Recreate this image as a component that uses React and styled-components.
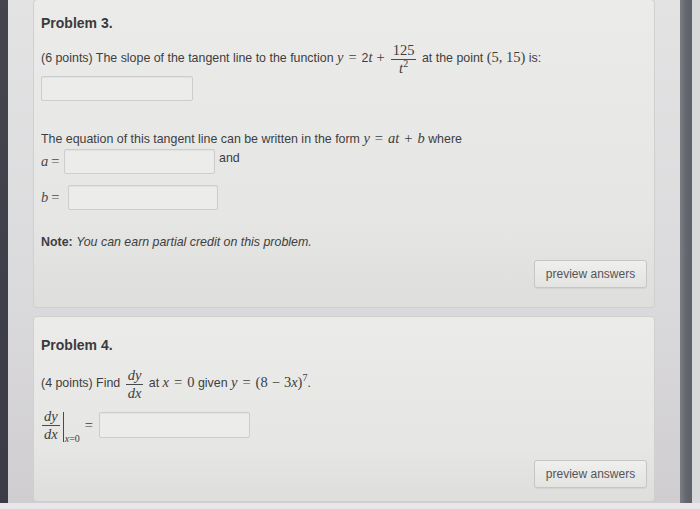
import React from "react";
import styled, { createGlobalStyle } from "styled-components";

const GlobalStyle = createGlobalStyle`
  html, body {
    margin: 0;
    padding: 0;
    background: #d9d8da;
  }
  body {
    font-family: "Liberation Sans", Arial, sans-serif;
    color: #3d3d3f;
  }
`;

const App = () => {
  return (
    <Page>
      <GlobalStyle />
      <Screen>
        <LeftEdge />
        <Main>
          <Card $top>
            <Title>Problem 3.</Title>
            <Line $mt={10}>
              (6 points) The slope of the tangent line to the function{" "}
              <M>y</M>
              <Op>=</Op>2<M>t</M>
              <Op $sp={4}>+</Op>
              <Frac>
                <Num>125</Num>
                <Den>
                  <M>t</M>
                  <sup>2</sup>
                </Den>
              </Frac>{" "}
              at the point <Mr>(5, 15)</Mr> is:
            </Line>
            <Field $w={152} $mt={0} />
            <Line $mt={28}>
              The equation of this tangent line can be written in the form{" "}
              <M>y</M>
              <Op>=</Op>
              <M>at</M>
              <Op $sp={5}>+</Op>
              <M>b</M> where
            </Line>
            <Row $mt={1}>
              <Label>
                <M>a</M>
                <Op $sp={3}>=</Op>
              </Label>
              <Field $w={151} />
              <Text>and</Text>
            </Row>
            <Row $mt={11}>
              <Label $w={27}>
                <M>b</M>
                <Op $sp={3}>=</Op>
              </Label>
              <Field $w={150} />
            </Row>
            <Line $mt={23}>
              <strong>Note:</strong> <em>You can earn partial credit on this problem.</em>
            </Line>
            <Actions $mt={9}>
              <Button>preview answers</Button>
            </Actions>
          </Card>
          <Card>
            <Title $mt={19}>Problem 4.</Title>
            <Line $mt={13}>
              (4 points) Find{" "}
              <Frac>
                <Num>
                  <M>dy</M>
                </Num>
                <Den>
                  <M>dx</M>
                </Den>
              </Frac>{" "}
              at <M>x</M>
              <Op>=</Op>
              <Mr>0</Mr> given <M>y</M>
              <Op>=</Op>
              <Mr>
                (8<Op $sp={4}>−</Op>3<M>x</M>)<sup>7</sup>
              </Mr>
              .
            </Line>
            <Row $mt={7}>
              <Eval>
                <Frac>
                  <Num>
                    <M>dy</M>
                  </Num>
                  <Den>
                    <M>dx</M>
                  </Den>
                </Frac>
                <Bar>
                  <Sub>
                    <M>x</M>=0
                  </Sub>
                </Bar>
              </Eval>
              <EqSign>=</EqSign>
              <Field $w={151} $h={26} />
            </Row>
            <Actions $mt={18}>
              <Button>preview answers</Button>
            </Actions>
          </Card>
        </Main>
        <Gutter />
        <Scrollbar />
        <RightEdge />
      </Screen>
      <BottomEdge />
    </Page>
  );
};

export default App;

const Page = styled.div`
  width: 700px;
  height: 509px;
  overflow: hidden;
  display: flex;
  flex-direction: column;
  background: linear-gradient(180deg, #e4e3e4 0%, #dad9db 60%, #cfcdd0 100%);
`;

const Screen = styled.div`
  display: flex;
  height: 503px;
`;

const LeftEdge = styled.div`
  width: 8px;
  flex: none;
  background: linear-gradient(180deg, #44454f 0%, #3a3b46 100%);
`;

const Main = styled.div`
  width: 622px;
  flex: none;
  margin-left: 25px;
  display: flex;
  flex-direction: column;
  gap: 8px;
`;

const Gutter = styled.div`
  width: 25px;
  flex: none;
`;

const Scrollbar = styled.div`
  width: 12px;
  flex: none;
  background: linear-gradient(90deg, #7a7d84 0%, #64676e 50%, #5c5f66 100%);
`;

const RightEdge = styled.div`
  flex: 1;
  background: #d8d7da;
`;

const BottomEdge = styled.div`
  flex: 1;
  background: #e8e6e9;
`;

const Card = styled.section`
  box-sizing: border-box;
  flex: none;
  height: ${(p) => (p.$top ? "309px" : "186px")};
  margin-top: ${(p) => (p.$top ? "-1px" : "0")};
  padding: 0 7px;
  background: linear-gradient(180deg, #ebebe9 0%, #e6e6e5 70%, #dededd 100%);
  border: 1px solid #d0d0d0;
  border-radius: 4px;
  display: flex;
  flex-direction: column;
  font-size: 12.4px;
`;

const Title = styled.div`
  margin-top: ${(p) => p.$mt ?? 14}px;
  font-size: 14px;
  font-weight: bold;
  line-height: 18px;
  color: #3a3a3c;
`;

const Line = styled.div`
  margin-top: ${(p) => p.$mt ?? 0}px;
  line-height: 18px;
  color: #3e3e40;
  white-space: nowrap;

  strong {
    font-weight: bold;
  }
`;

const Text = styled.span`
  margin-left: 4px;
  align-self: flex-start;
  line-height: 18px;
`;

const M = styled.span`
  font-family: "Liberation Serif", "Times New Roman", serif;
  font-style: italic;
  font-size: 14.5px;
`;

const Mr = styled.span`
  font-family: "Liberation Serif", "Times New Roman", serif;
  font-size: 14.5px;

  sup {
    font-size: 10px;
  }
`;

const Op = styled.span`
  font-family: "Liberation Serif", "Times New Roman", serif;
  font-size: 14.5px;
  margin: 0 ${(p) => p.$sp ?? 5}px;
`;

const Frac = styled.span`
  display: inline-flex;
  flex-direction: column;
  align-items: center;
  vertical-align: middle;
  font-family: "Liberation Serif", "Times New Roman", serif;
  font-size: 14.5px;
  line-height: 16px;
  margin: 0 2px;
`;

const Num = styled.span`
  padding: 0 2px 1px;
  border-bottom: 1px solid #4a4a4a;
`;

const Den = styled.span`
  padding: 0 2px;

  sup {
    font-size: 10px;
    line-height: 0;
  }
`;

const Field = styled.div`
  box-sizing: border-box;
  width: ${(p) => p.$w}px;
  height: ${(p) => p.$h ?? 25}px;
  margin-top: ${(p) => p.$mt ?? 0}px;
  background: #ececeb;
  border: 1px solid #cdcdcd;
  border-radius: 2px;
  box-shadow: inset 0 1px 1px rgba(0, 0, 0, 0.04);
`;

const Row = styled.div`
  display: flex;
  align-items: center;
  margin-top: ${(p) => p.$mt ?? 0}px;
`;

const Label = styled.span`
  width: ${(p) => p.$w ?? 23}px;
  white-space: nowrap;
  color: #4a4a4c;
`;

const Eval = styled.span`
  display: inline-flex;
  align-items: stretch;
  margin-left: -1px;
`;

const Bar = styled.span`
  display: flex;
  align-items: flex-end;
  border-left: 1px solid #4a4a4a;
  margin: 4px 0 0 1px;
  padding-left: 1px;
`;

const Sub = styled.span`
  font-family: "Liberation Serif", "Times New Roman", serif;
  font-size: 10px;
  line-height: 10px;
  margin-bottom: -2px;

  span {
    font-size: 10px;
  }
`;

const EqSign = styled.span`
  font-family: "Liberation Serif", "Times New Roman", serif;
  font-size: 14.5px;
  margin: 0 6px 0 5px;
`;

const Actions = styled.div`
  display: flex;
  justify-content: flex-end;
  margin-top: ${(p) => p.$mt ?? 0}px;
`;

const Button = styled.button`
  box-sizing: border-box;
  width: 113px;
  height: 28px;
  padding: 0;
  font-family: "Liberation Sans", Arial, sans-serif;
  font-size: 12px;
  color: #555557;
  background: linear-gradient(180deg, #efefee 0%, #e3e3e2 100%);
  border: 1px solid #c6c6c6;
  border-radius: 3px;
  box-shadow: 0 1px 1px rgba(0, 0, 0, 0.06);
`;
